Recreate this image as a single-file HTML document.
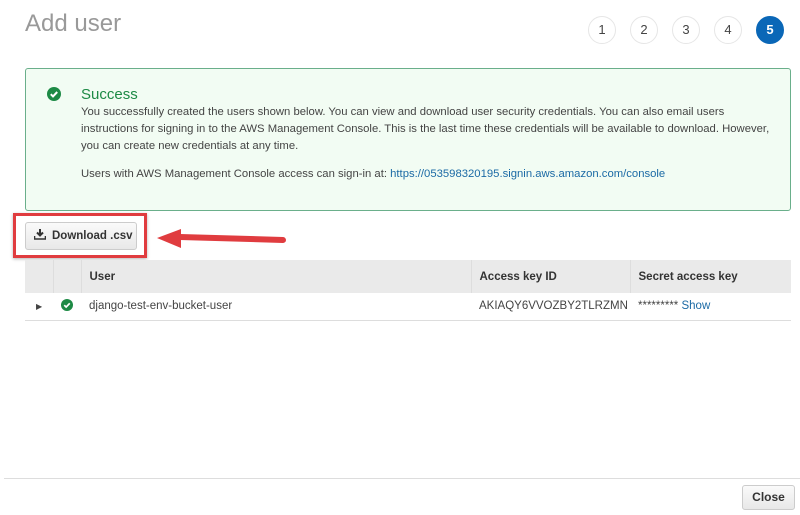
<!DOCTYPE html>
<html><head><style>
*{margin:0;padding:0;box-sizing:border-box}
body{width:800px;height:515px;background:#fff;font-family:"Liberation Sans",sans-serif;position:relative;overflow:hidden;color:#333}
.a{position:absolute}
.step{position:absolute;top:16px;width:28px;height:28px;border-radius:50%;border:1px solid #e6e6e6;font-size:13px;text-align:center;line-height:26px;color:#444}
.gb{left:25px;top:68px;width:766px;height:143px;background:#f2fcf3;border:1px solid #6aaf8b;border-radius:3px}
.p{font-size:11.3px;line-height:17px;color:#444;white-space:nowrap}
th,td{font-size:11.5px;text-align:left;padding:0 8px;white-space:nowrap}
</style></head><body>
<div class="a" style="left:25px;top:10px;font-size:24px;color:#999">Add user</div>
<div class="step" style="left:588px">1</div>
<div class="step" style="left:630px">2</div>
<div class="step" style="left:672px">3</div>
<div class="step" style="left:714px">4</div>
<div class="step" style="left:756px;background:#0a67b7;border-color:#0a67b7;color:#fff;font-weight:bold">5</div>

<div class="a gb"></div>
<svg class="a" style="left:47px;top:87px" width="14" height="14" viewBox="0 0 14 14"><circle cx="7" cy="7" r="7" fill="#1d8a45"/><path d="M3.8 7.2l2.2 2.2 4.2-4.4" stroke="#fff" stroke-width="2" fill="none"/></svg>
<div class="a" style="left:81px;top:86px;font-size:15px;color:#1d8a45">Success</div>
<div class="a p" style="left:81px;top:104px">You successfully created the users shown below. You can view and download user security credentials. You can also email users<br>instructions for signing in to the AWS Management Console. This is the last time these credentials will be available to download. However,<br>you can create new credentials at any time.</div>
<div class="a p" style="left:81px;top:166px">Users with AWS Management Console access can sign-in at: <span style="color:#1b6aa5">https://053598320195.signin.aws.amazon.com/console</span></div>

<div class="a" style="left:13px;top:213px;width:134px;height:45px;border:3px solid #e03c3f;box-shadow:0 1px 3px rgba(0,0,0,.3)"></div>
<div class="a" style="left:25px;top:222px;width:112px;height:28px;border:1px solid #ccc;border-radius:3px;background:linear-gradient(#fafafa,#e8e8e8);font-size:11.5px;font-weight:bold;line-height:26px;padding-left:26px;color:#333;white-space:nowrap">Download .csv</div>
<svg class="a" style="left:34px;top:228px" width="12" height="12" viewBox="0 0 12 12"><path d="M6 1v6M3 4.5l3 3 3-3" stroke="#333" stroke-width="2" fill="none"/><path d="M0.5 8v3h11V8" stroke="#333" stroke-width="1.6" fill="none"/></svg>
<svg class="a" style="left:150px;top:224px" width="140" height="30"><path d="M30 13 L133 16" stroke="#e03c3f" stroke-width="6" stroke-linecap="round"/><path d="M7 14 L31 5 L31 24 Z" fill="#e03c3f"/></svg>

<table class="a" style="left:25px;top:260px;width:766px;border-collapse:collapse;table-layout:fixed">
<colgroup><col style="width:28px"><col style="width:28px"><col style="width:390px"><col style="width:159px"><col style="width:161px"></colgroup>
<tr style="background:#eaeaea;height:33px;color:#333;font-weight:bold">
<th style="border-right:1px solid #ddd"></th><th style="border-right:1px solid #ddd"></th><th style="border-right:1px solid #ddd">User</th><th style="border-right:1px solid #ddd">Access key ID</th><th>Secret access key</th></tr>
<tr style="height:27px;border-bottom:1px solid #ddd;color:#444">
<td style="font-size:8px;padding-left:11px">▶</td><td><svg width="12" height="12" viewBox="0 0 14 14"><circle cx="7" cy="7" r="7" fill="#1d8a45"/><path d="M3.8 7.2l2.2 2.2 4.2-4.4" stroke="#fff" stroke-width="2" fill="none"/></svg></td><td>django-test-env-bucket-user</td><td>AKIAQY6VVOZBY2TLRZMN</td><td>********* <span style="color:#1b6aa5">Show</span></td></tr>
</table>

<div class="a" style="left:4px;top:478px;width:796px;height:1px;background:#ddd"></div>
<div class="a" style="left:742px;top:485px;width:53px;height:25px;border:1px solid #ccc;border-radius:3px;background:linear-gradient(#fafafa,#e8e8e8);font-size:12px;font-weight:bold;text-align:center;line-height:23px">Close</div>
</body></html>
